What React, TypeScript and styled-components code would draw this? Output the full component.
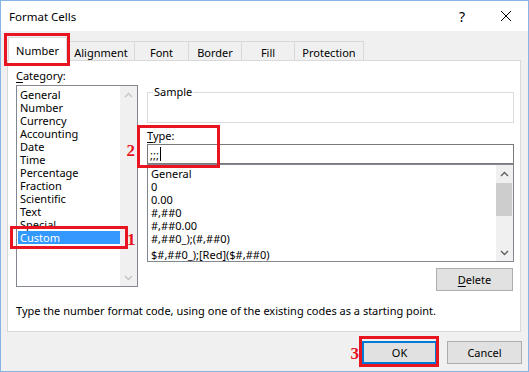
import React from "react";
import styled, { createGlobalStyle } from "styled-components";

const GlobalStyle = createGlobalStyle`
  html, body { margin: 0; padding: 0; background: #fff; }
  body {
    font-family: "Noto Sans", "Liberation Sans", sans-serif;
    font-size: 11px;
    color: #000;
  }
  * { box-sizing: border-box; }
`;

const Window = styled.div`
  width: 529px;
  height: 372px;
  border: 1px solid #86b5e6;
  display: flex;
  flex-direction: column;
  background: #f0f0f0;
`;

const TitleBar = styled.div`
  height: 30px;
  background: #fff;
  display: flex;
  align-items: center;
  padding-left: 8px;
  font-size: 11.5px;
`;

const Title = styled.span`
  flex: 1;
`;

const TitleButton = styled.span`
  width: 44px;
  height: 30px;
  display: flex;
  align-items: center;
  justify-content: center;
  font-size: 14px;
`;

const Body = styled.div`
  flex: 1;
  display: flex;
  flex-direction: column;
  padding: 6px 7px 7px 6px;
`;

const TabRow = styled.div`
  display: flex;
  align-items: flex-end;
  padding-left: 1px;
`;

const Tab = styled.div<{ $w: number; $active?: boolean }>`
  position: relative;
  width: ${(p) => p.$w}px;
  height: ${(p) => (p.$active ? 24 : 19)}px;
  margin-bottom: ${(p) => (p.$active ? -1 : 0)}px;
  margin-left: ${(p) => (p.$active ? 0 : -1)}px;
  z-index: ${(p) => (p.$active ? 2 : 0)};
  background: ${(p) => (p.$active ? "#fff" : "#f0f0f0")};
  border: 1px solid #d9d9d9;
  border-bottom: none;
  display: flex;
  align-items: center;
  justify-content: center;
  padding-top: ${(p) => (p.$active ? 1 : 2)}px;
  &:nth-child(2) { margin-left: 0; }
`;

const Panel = styled.div`
  flex: 1;
  background: #fff;
  border: 1px solid #d9d9d9;
  padding: 8px 6px 0 8px;
  display: flex;
  flex-direction: column;
  position: relative;
  z-index: 1;
`;

const MainRow = styled.div`
  display: flex;
  gap: 9px;
  align-items: flex-start;
`;

const LeftColumn = styled.div`
  width: 122px;
  display: flex;
  flex-direction: column;
  gap: 2px;
`;

const RightColumn = styled.div`
  flex: 1;
  padding-top: 16px;
  display: flex;
  flex-direction: column;
`;

const Label = styled.div`
  line-height: 14px;
  height: 14px;
  white-space: nowrap;
`;

const Key = styled.span`
  text-decoration: underline;
  text-underline-offset: 2px;
`;

const ListBox = styled.div<{ $h: number }>`
  position: relative;
  height: ${(p) => p.$h}px;
  border: 1px solid #828790;
  background: #fff;
  display: flex;
`;

const Items = styled.div`
  flex: 1;
  padding-top: 2px;
  display: flex;
  flex-direction: column;
`;

const Item = styled.div<{ $selected?: boolean; $gap?: number }>`
  position: relative;
  height: 13px;
  line-height: 13px;
  margin: ${(p) => p.$gap ?? 0}px 0 0 1px;
  padding-left: 2px;
  white-space: nowrap;
  background: ${(p) => (p.$selected ? "#3399ff" : "transparent")};
  color: ${(p) => (p.$selected ? "#fff" : "#000")};
`;

const ScrollBar = styled.div`
  width: 17px;
  background: #f0f0f0;
  display: flex;
  flex-direction: column;
`;

const ScrollButton = styled.div`
  height: 17px;
  display: flex;
  align-items: center;
  justify-content: center;
`;

const Track = styled.div`
  flex: 1;
  padding-top: 1px;
`;

const Thumb = styled.div`
  height: 33px;
  margin-right: 1px;
  background: #cdcdcd;
`;

const Fieldset = styled.fieldset`
  margin: 0;
  padding: 0 5px;
  min-width: 0;
  border: 1px solid #dcdcdc;
`;

const Legend = styled.legend`
  padding: 0 1px;
  line-height: 14px;
`;

const SampleArea = styled.div`
  height: 23px;
`;

const TypeField = styled.div`
  position: relative;
  margin-top: 6px;
  display: flex;
  flex-direction: column;
`;

const TextInput = styled.div`
  margin-top: 1px;
  height: 20px;
  border: 1px solid #7a7a7a;
  padding-left: 2px;
  display: flex;
  align-items: center;
`;

const Caret = styled.span`
  width: 1px;
  height: 14px;
  background: #000;
  margin-left: 1px;
`;

const Button = styled.div<{ $focused?: boolean; $w?: number }>`
  position: relative;
  width: ${(p) => p.$w ?? 75}px;
  height: 23px;
  background: #e1e1e1;
  border: ${(p) => (p.$focused ? "2px solid #0078d7" : "1px solid #adadad")};
  display: flex;
  align-items: center;
  justify-content: center;
`;

const DeleteRow = styled.div`
  margin-top: 6px;
  display: flex;
  justify-content: flex-end;
  padding-right: 1px;
`;

const Hint = styled.div`
  margin-top: 13px;
  line-height: 14px;
  white-space: nowrap;
`;

const Footer = styled.div`
  margin-top: 9px;
  margin-right: -1px;
  display: flex;
  justify-content: flex-end;
  gap: 10px;
`;

const RedBox = styled.div<{ $top: number; $left: number; $bottom: number; $right?: number; $width?: number }>`
  position: absolute;
  top: ${(p) => p.$top}px;
  left: ${(p) => p.$left}px;
  bottom: ${(p) => p.$bottom}px;
  ${(p) => (p.$width ? `width: ${p.$width}px;` : `right: ${p.$right}px;`)}
  border: 3px solid #e8141f;
  pointer-events: none;
  z-index: 5;
`;

const Badge = styled.span<{ $side: "left" | "right"; $dy: number; $gap: number }>`
  position: absolute;
  ${(p) => (p.$side === "right" ? `left: calc(100% + ${p.$gap}px);` : `right: calc(100% + ${p.$gap}px);`)}
  top: 50%;
  transform: translateY(calc(-50% + ${(p) => p.$dy}px));
  font-family: "Liberation Serif", "DejaVu Serif", serif;
  font-weight: bold;
  font-size: 17px;
  line-height: 17px;
  color: #e8141f;
`;

const Chevron = ({ up, color }: { up?: boolean; color: string }) => (
  <svg width="9" height="6" viewBox="0 0 9 6">
    <path
      d={up ? "M1 5 L4.5 1.5 L8 5" : "M1 1 L4.5 4.5 L8 1"}
      fill="none"
      stroke={color}
      strokeWidth="1.4"
    />
  </svg>
);

const CloseIcon = () => (
  <svg width="10" height="10" viewBox="0 0 10 10">
    <path d="M0 0 L10 10 M10 0 L0 10" stroke="#000" strokeWidth="1" />
  </svg>
);

const tabs = [
  { name: "Number", w: 59 },
  { name: "Alignment", w: 68 },
  { name: "Font", w: 55 },
  { name: "Border", w: 54 },
  { name: "Fill", w: 54 },
  { name: "Protection", w: 70 },
];

const categories = [
  "General", "Number", "Currency", "Accounting", "Date", "Time",
  "Percentage", "Fraction", "Scientific", "Text", "Special", "Custom",
];

const formats = [
  "General", "0", "0.00", "#,##0", "#,##0.00", "#,##0_);(#,##0)",
  "$#,##0_);[Red]($#,##0)",
];

export default function App() {
  return (
    <>
      <GlobalStyle />
      <Window>
        <TitleBar>
          <Title>Format Cells</Title>
          <TitleButton>?</TitleButton>
          <TitleButton>
            <CloseIcon />
          </TitleButton>
        </TitleBar>
        <Body>
          <TabRow>
            {tabs.map((t, i) => (
              <Tab key={t.name} $w={t.w} $active={i === 0}>
                {t.name}
                {i === 0 && <RedBox $top={-5} $left={-5} $right={-4} $bottom={-5} />}
              </Tab>
            ))}
          </TabRow>
          <Panel>
            <MainRow>
              <LeftColumn>
                <Label>
                  <Key>C</Key>ategory:
                </Label>
                <ListBox $h={202}>
                  <Items>
                    {categories.map((c) => (
                      <Item key={c} $selected={c === "Custom"}>
                        {c}
                        {c === "Custom" && (
                          <RedBox $top={-5} $left={-8} $right={-8} $bottom={-5}>
                            <Badge $side="right" $dy={1} $gap={2}>1</Badge>
                          </RedBox>
                        )}
                      </Item>
                    ))}
                  </Items>
                  <ScrollBar>
                    <ScrollButton>
                      <Chevron up color="#c4c4c4" />
                    </ScrollButton>
                    <Track />
                    <ScrollButton>
                      <Chevron color="#c4c4c4" />
                    </ScrollButton>
                  </ScrollBar>
                </ListBox>
              </LeftColumn>
              <RightColumn>
                <Fieldset>
                  <Legend>Sample</Legend>
                  <SampleArea />
                </Fieldset>
                <TypeField>
                  <Label>
                    <Key>T</Key>ype:
                  </Label>
                  <TextInput>
                    ;;;
                    <Caret />
                  </TextInput>
                  <RedBox $top={-4} $left={-10} $width={83} $bottom={-4}>
                    <Badge $side="left" $dy={3} $gap={5}>2</Badge>
                  </RedBox>
                </TypeField>
                <ListBox $h={98}>
                  <Items>
                    {formats.map((f, i) => (
                      <Item key={f} $gap={i === formats.length - 1 ? 3 : 0}>
                        {f}
                      </Item>
                    ))}
                  </Items>
                  <ScrollBar>
                    <ScrollButton>
                      <Chevron up color="#606060" />
                    </ScrollButton>
                    <Track>
                      <Thumb />
                    </Track>
                    <ScrollButton>
                      <Chevron color="#606060" />
                    </ScrollButton>
                  </ScrollBar>
                </ListBox>
                <DeleteRow>
                  <Button $w={77}>
                    <span>
                      <Key>D</Key>elete
                    </span>
                  </Button>
                </DeleteRow>
              </RightColumn>
            </MainRow>
            <Hint>Type the number format code, using one of the existing codes as a starting point.</Hint>
          </Panel>
          <Footer>
            <Button $focused>
              OK
              <RedBox $top={-7} $left={-5} $right={-4} $bottom={-5}>
                <Badge $side="left" $dy={1} $gap={3}>3</Badge>
              </RedBox>
            </Button>
            <Button>Cancel</Button>
          </Footer>
        </Body>
      </Window>
    </>
  );
}
